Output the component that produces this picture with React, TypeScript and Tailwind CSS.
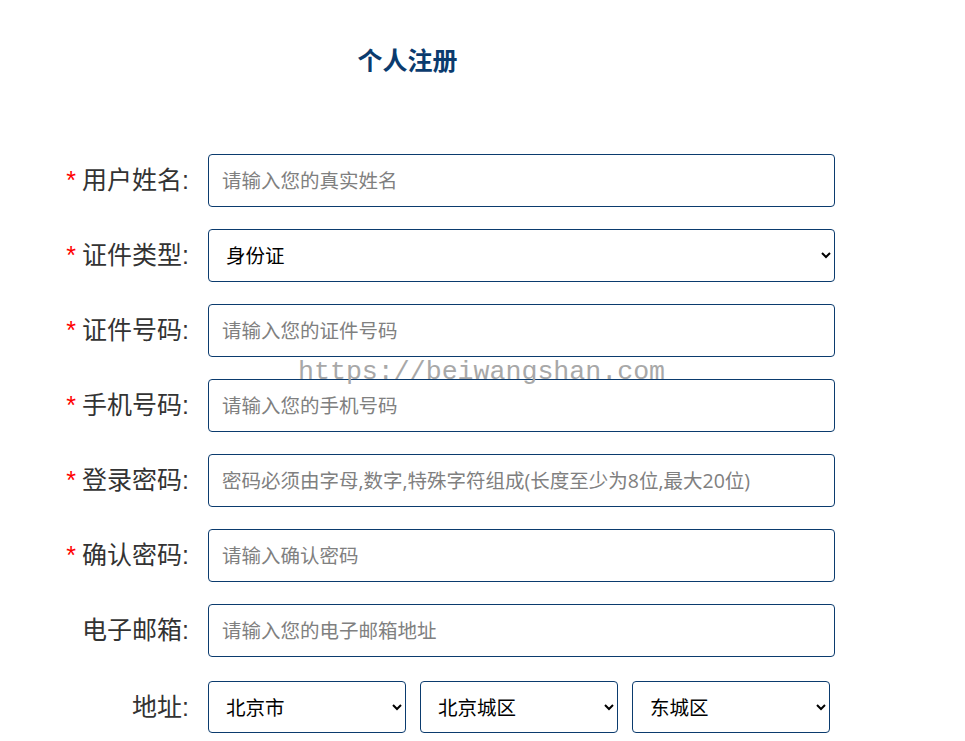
import React from 'react';

const font = { fontFamily: '"Open Sans", "Noto Sans CJK SC", sans-serif' };

const fields = [
  { label: '用户姓名', required: true, placeholder: '请输入您的真实姓名' },
  { label: '证件类型', required: true, select: ['身份证', '护照', '军官证'] },
  { label: '证件号码', required: true, placeholder: '请输入您的证件号码' },
  { label: '手机号码', required: true, placeholder: '请输入您的手机号码' },
  { label: '登录密码', required: true, placeholder: '密码必须由字母,数字,特殊字符组成(长度至少为8位,最大20位)', type: 'password' },
  { label: '确认密码', required: true, placeholder: '请输入确认密码', type: 'password' },
  { label: '电子邮箱', required: false, placeholder: '请输入您的电子邮箱地址' },
];

const boxClass =
  'h-[53px] w-full rounded-[4px] border border-[#0b3b6e] bg-white px-[13px] text-[19.5px] text-black outline-none placeholder:text-[#808080]';

const Label = ({ text, required }: { text: string; required?: boolean }) => (
  <label
    className="w-[189px] shrink-0 text-right text-[25px] leading-none text-[#333]"
    style={{ fontFamily: '"Liberation Sans", "Noto Sans CJK SC", sans-serif' }}
  >
    {required && <span className="mr-[6px] text-[#ff0000]">*</span>}
    {text}:
  </label>
);

export default function App() {
  return (
    <div className="relative min-h-[741px] bg-white" style={font}>
      <div className="w-[815px] pt-[45px] text-center">
        <h1 className="text-[25px] font-bold leading-[30px] text-[#0b3b6e]">个人注册</h1>
      </div>

      <form className="mt-[79px] flex w-[835px] flex-col gap-[22px]">
        {fields.map((f) => (
          <div key={f.label} className="flex items-center gap-[19px]">
            <Label text={f.label} required={f.required} />
            {f.select ? (
              <select className={boxClass} defaultValue={f.select[0]}>
                {f.select.map((o) => (
                  <option key={o}>{o}</option>
                ))}
              </select>
            ) : (
              <input className={boxClass} type="text" placeholder={f.placeholder} />
            )}
          </div>
        ))}

        <div className="mt-[2px] flex items-center gap-[19px]">
          <Label text="地址" />
          <div className="flex gap-[14px]">
            <select className={`${boxClass} !h-[52px] !w-[198px]`} defaultValue="北京市">
              <option>北京市</option>
              <option>上海市</option>
            </select>
            <select className={`${boxClass} !h-[52px] !w-[198px]`} defaultValue="北京城区">
              <option>北京城区</option>
            </select>
            <select className={`${boxClass} !h-[52px] !w-[198px]`} defaultValue="东城区">
              <option>东城区</option>
              <option>西城区</option>
            </select>
          </div>
        </div>
      </form>

      <div
        className="pointer-events-none absolute left-[298px] top-[355px] text-[26.6px] leading-[34px] text-[#a8a8a8]"
        style={{ fontFamily: '"Liberation Mono", monospace' }}
      >
        https://beiwangshan.com
      </div>
    </div>
  );
}
